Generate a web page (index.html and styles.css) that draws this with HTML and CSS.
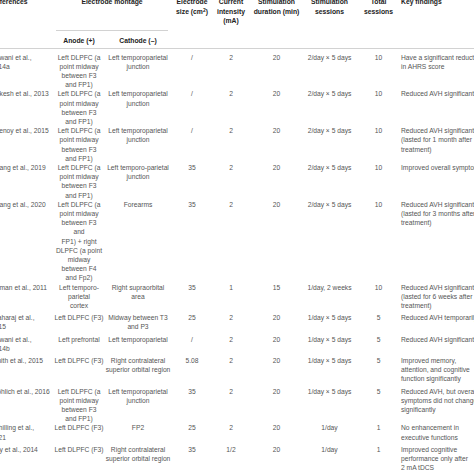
FILE: index.html
```html
<!DOCTYPE html>
<html lang="en">
<head>
<meta charset="utf-8">
<title>tDCS studies</title>
<link rel="stylesheet" href="styles.css">
</head>
<body>
<div class="viewport">
<table class="tbl">
  <colgroup>
    <col class="c-ref"><col class="c-anode"><col class="c-cathode"><col class="c-size"><col class="c-current"><col class="c-duration"><col class="c-sessions"><col class="c-total"><col class="c-key">
  </colgroup>
  <thead>
    <tr>
      <th class="ref" rowspan="2">References</th>
      <th class="montage" colspan="2"><span class="montage-label">Electrode montage</span></th>
      <th rowspan="2">Electrode<br>size (cm<sup>2</sup>)</th>
      <th rowspan="2">Current<br>intensity<br>(mA)</th>
      <th rowspan="2">Stimulation<br>duration (min)</th>
      <th rowspan="2">Stimulation<br>sessions</th>
      <th rowspan="2">Total<br>sessions</th>
      <th class="key" rowspan="2">Key findings</th>
    </tr>
    <tr>
      <th class="sub">Anode (+)</th>
      <th class="sub">Cathode (–)</th>
    </tr>
  </thead>
  <tbody>
    <tr>
      <td class="ref">Nawani et al.,<br>2014a</td>
      <td>Left DLPFC (a<br>point midway<br>between F3<br>and FP1)</td>
      <td>Left temporoparietal<br>junction</td>
      <td>/</td><td>2</td><td>20</td><td>2/day × 5 days</td><td>10</td>
      <td class="key">Have a significant reduction<br>in AHRS score</td>
    </tr>
    <tr>
      <td class="ref">Rakesh et al., 2013</td>
      <td>Left DLPFC (a<br>point midway<br>between F3<br>and FP1)</td>
      <td>Left temporoparietal<br>junction</td>
      <td>/</td><td>2</td><td>20</td><td>2/day × 5 days</td><td>10</td>
      <td class="key">Reduced AVH significantly</td>
    </tr>
    <tr>
      <td class="ref">Shenoy et al., 2015</td>
      <td>Left DLPFC (a<br>point midway<br>between F3<br>and FP1)</td>
      <td>Left temporoparietal<br>junction</td>
      <td>/</td><td>2</td><td>20</td><td>2/day × 5 days</td><td>10</td>
      <td class="key">Reduced AVH significantly<br>(lasted for 1 month after<br>treatment)</td>
    </tr>
    <tr>
      <td class="ref">Huang et al., 2019</td>
      <td>Left DLPFC (a<br>point midway<br>between F3<br>and FP1)</td>
      <td>Left temporo-parietal<br>junction</td>
      <td>35</td><td>2</td><td>20</td><td>2/day × 5 days</td><td>10</td>
      <td class="key">Improved overall symptoms</td>
    </tr>
    <tr>
      <td class="ref">Huang et al., 2020</td>
      <td>Left DLPFC (a<br>point midway<br>between F3<br>and<br>FP1) + right<br>DLPFC (a point<br>midway<br>between F4<br>and Fp2)</td>
      <td>Forearms</td>
      <td>35</td><td>2</td><td>20</td><td>2/day × 5 days</td><td>10</td>
      <td class="key">Reduced AVH significantly<br>(lasted for 3 months after<br>treatment)</td>
    </tr>
    <tr class="roomy">
      <td class="ref">Homan et al., 2011</td>
      <td>Left temporo-<br>parietal<br>cortex</td>
      <td>Right supraorbital<br>area</td>
      <td>35</td><td>1</td><td>15</td><td>1/day, 2 weeks</td><td>10</td>
      <td class="key">Reduced AVH significantly<br>(lasted for 6 weeks after<br>treatment)</td>
    </tr>
    <tr class="roomy">
      <td class="ref">Praharaj et al.,<br>2015</td>
      <td>Left DLPFC (F3)</td>
      <td>Midway between T3<br>and P3</td>
      <td>25</td><td>2</td><td>20</td><td>1/day × 5 days</td><td>5</td>
      <td class="key">Reduced AVH temporarily</td>
    </tr>
    <tr class="roomy">
      <td class="ref">Nawani et al.,<br>2014b</td>
      <td>Left prefrontal</td>
      <td>Left temporoparietal</td>
      <td>/</td><td>2</td><td>20</td><td>1/day × 5 days</td><td>5</td>
      <td class="key">Reduced AVH significantly</td>
    </tr>
    <tr class="roomy">
      <td class="ref">Smith et al., 2015</td>
      <td>Left DLPFC (F3)</td>
      <td>Right contralateral<br>superior orbital region</td>
      <td>5.08</td><td>2</td><td>20</td><td>1/day × 5 days</td><td>5</td>
      <td class="key">Improved memory,<br>attention, and cognitive<br>function significantly</td>
    </tr>
    <tr>
      <td class="ref">Fröhlich et al., 2016</td>
      <td>Left DLPFC (a<br>point midway<br>between F3<br>and FP1)</td>
      <td>Left temporoparietal<br>junction</td>
      <td>35</td><td>2</td><td>20</td><td>1/day × 5 days</td><td>5</td>
      <td class="key">Reduced AVH, but overall<br>symptoms did not change<br>significantly</td>
    </tr>
    <tr class="roomy">
      <td class="ref">Schilling et al.,<br>2021</td>
      <td>Left DLPFC (F3)</td>
      <td>FP2</td>
      <td>25</td><td>2</td><td>20</td><td>1/day</td><td>1</td>
      <td class="key">No enhancement in<br>executive functions</td>
    </tr>
    <tr>
      <td class="ref">Hoy et al., 2014</td>
      <td>Left DLPFC (F3)</td>
      <td>Right contralateral<br>superior orbital region</td>
      <td>35</td><td>1/2</td><td>20</td><td>1/day</td><td>1</td>
      <td class="key">Improved cognitive<br>performance only after<br>2 mA tDCS</td>
    </tr>
  </tbody>
</table>
</div>
</body>
</html>
```
FILE: styles.css
```css
html, body {
  margin: 0;
  padding: 0;
  background: #ffffff;
}

.viewport {
  width: 474px;
  height: 474px;
  overflow: hidden;
  background: #ffffff;
  font-family: "Liberation Sans", Arial, sans-serif;
}

.tbl {
  border-collapse: collapse;
  table-layout: fixed;
  width: 510px;
  margin: -4px 0 0 -9px;
  color: #555555;
  font-size: 6.7px;
  line-height: 9.2px;
}

.c-ref { width: 63px; }
.c-anode { width: 50px; }
.c-cathode { width: 68px; }
.c-size { width: 40px; }
.c-current { width: 38px; }
.c-duration { width: 53px; }
.c-sessions { width: 53px; }
.c-total { width: 45px; }
.c-key { width: 100px; }

thead {
  border-bottom: 1px solid #d2d2d2;
}

th {
  font-weight: bold;
  color: #222222;
  font-size: 6.8px;
  line-height: 9.5px;
  vertical-align: top;
  text-align: center;
  padding: 1px 0 0;
  white-space: nowrap;
}

th sup {
  font-size: 5px;
  line-height: 0;
  vertical-align: 2.5px;
}

.montage-label {
  display: block;
  margin: 0 4px 0 2px;
  padding-bottom: 23px;
  border-bottom: 1px solid #d2d2d2;
}

th.sub {
  padding: 5px 0 3px;
}

td {
  vertical-align: top;
  text-align: center;
  padding: 0;
  white-space: nowrap;
}

tbody tr:first-child td {
  padding-top: 3.5px;
}

tbody tr.roomy td {
  padding-bottom: 3px;
}

.ref,
.key {
  text-align: left;
}
```
